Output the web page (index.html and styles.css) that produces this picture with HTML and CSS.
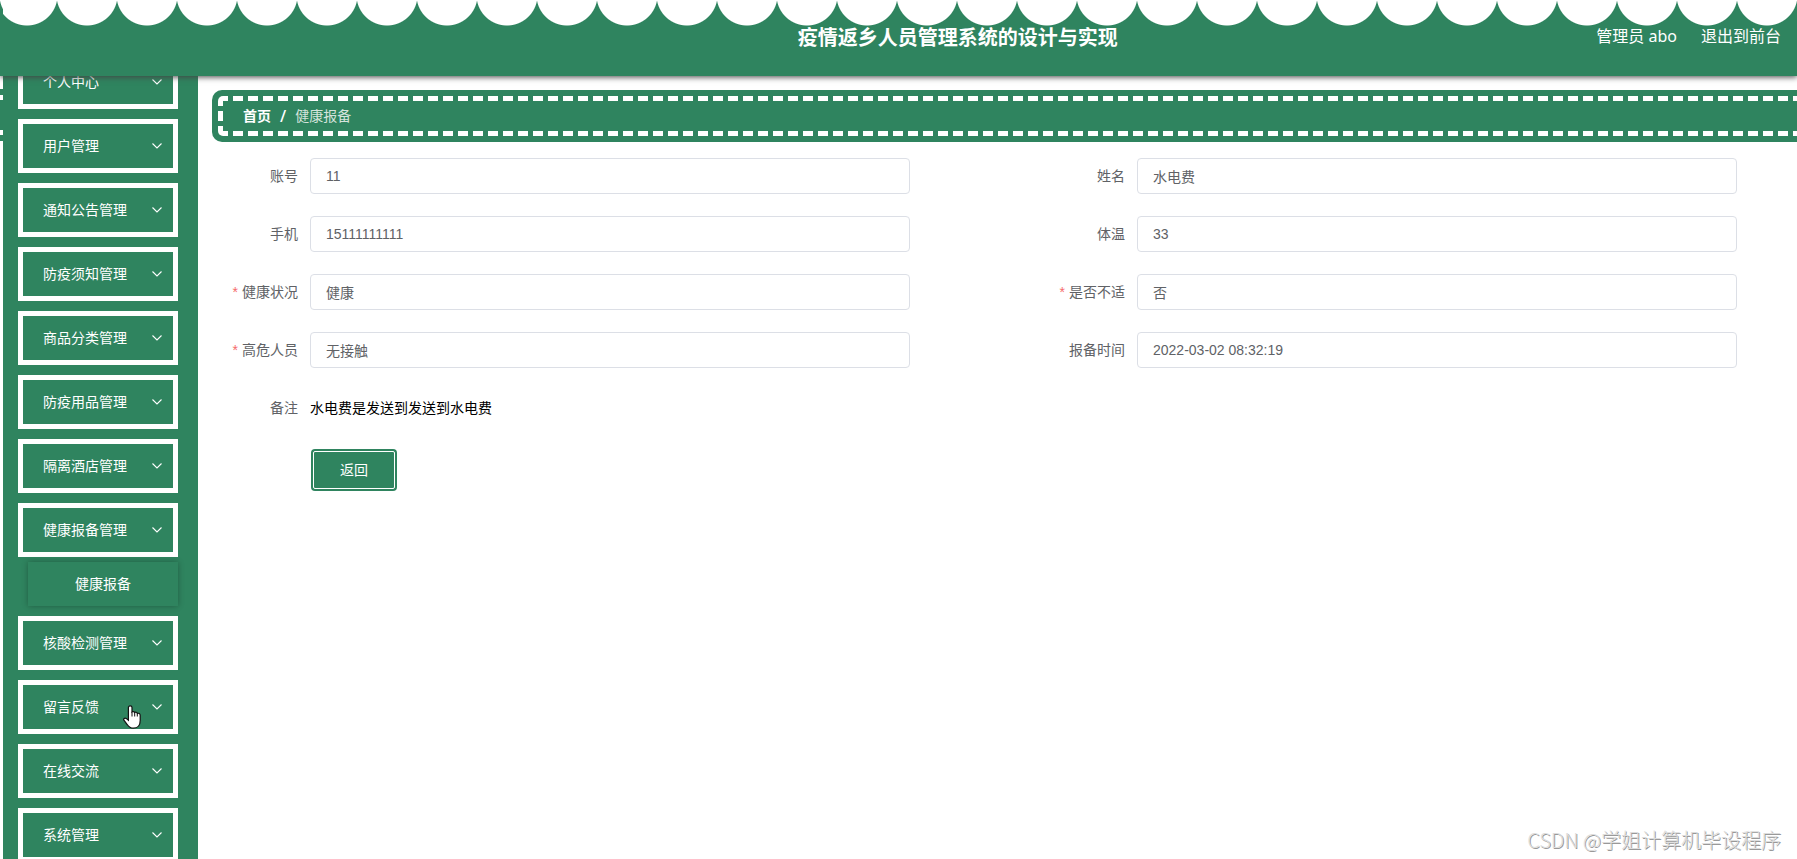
FILE: index.html
```
<!DOCTYPE html>
<html lang="zh-CN">
<head>
<meta charset="utf-8">
<title>疫情返乡人员管理系统的设计与实现</title>
<link rel="stylesheet" href="styles.css">
</head>
<body>
<svg class="defs" width="0" height="0" aria-hidden="true">
  <symbol id="chevron" viewBox="0 0 12 12"><path d="M1.5 3.5 6 8l4.5-4.5" fill="none" stroke="currentColor" stroke-width="1.1"/></symbol>
</svg>
<header class="topbar">
  <h1 class="topbar-title">疫情返乡人员管理系统的设计与实现</h1>
  <nav class="topbar-nav">
    <span>管理员 abo</span>
    <a href="#logout">退出到前台</a>
  </nav>
</header>
<div class="layout">
  <div class="edge"></div>
  <aside class="sidebar">
    <ul class="menu">
      <li><button class="menu-item" type="button">个人中心<svg class="chevron"><use href="#chevron"/></svg></button></li>
      <li><button class="menu-item" type="button">用户管理<svg class="chevron"><use href="#chevron"/></svg></button></li>
      <li><button class="menu-item" type="button">通知公告管理<svg class="chevron"><use href="#chevron"/></svg></button></li>
      <li><button class="menu-item" type="button">防疫须知管理<svg class="chevron"><use href="#chevron"/></svg></button></li>
      <li><button class="menu-item" type="button">商品分类管理<svg class="chevron"><use href="#chevron"/></svg></button></li>
      <li><button class="menu-item" type="button">防疫用品管理<svg class="chevron"><use href="#chevron"/></svg></button></li>
      <li><button class="menu-item" type="button">隔离酒店管理<svg class="chevron"><use href="#chevron"/></svg></button></li>
      <li>
        <button class="menu-item" type="button">健康报备管理<svg class="chevron"><use href="#chevron"/></svg></button>
        <a class="submenu-item" href="#report">健康报备</a>
      </li>
      <li><button class="menu-item" type="button">核酸检测管理<svg class="chevron"><use href="#chevron"/></svg></button></li>
      <li class="hovered">
        <button class="menu-item" type="button">留言反馈<svg class="chevron"><use href="#chevron"/></svg></button>
        <svg class="pointer" viewBox="0 0 18 24" aria-hidden="true"><path d="M7.2.8c1.1 0 1.8.8 1.8 1.8v4.2c.5-.5 2.3-.4 2.7.7.8-.6 2.3-.3 2.6.9 1.4-.5 2.9.2 2.9 1.8v5.3c0 4.300-2.200 7.700-6.700 7.700-3 0-4.800-1.200-6.100-3.400L.9 15.200c-.8-1.300.8-2.700 2.200-1.800l2.300 1.900V2.600c0-1 .7-1.800 1.800-1.800Z" fill="#fff" stroke="#111" stroke-width="1.200"/><path d="M9 6.800v4.700M11.700 7.500v4M14.300 8.400v3.100" fill="none" stroke="#111"/></svg>
      </li>
      <li><button class="menu-item" type="button">在线交流<svg class="chevron"><use href="#chevron"/></svg></button></li>
      <li><button class="menu-item" type="button">系统管理<svg class="chevron"><use href="#chevron"/></svg></button></li>
    </ul>
  </aside>
  <main class="main">
    <div class="page">
      <nav class="breadcrumb">
        <div class="breadcrumb-inner"><a href="#home">首页</a><b>/</b><span>健康报备</span></div>
      </nav>
      <form class="form">
        <div class="field"><label for="account">账号</label><input id="account" value="11" readonly></div>
        <div class="field"><label for="name">姓名</label><input id="name" value="水电费" readonly></div>
        <div class="field"><label for="phone">手机</label><input id="phone" value="15111111111" readonly></div>
        <div class="field"><label for="temp">体温</label><input id="temp" value="33" readonly></div>
        <div class="field required"><label for="health">健康状况</label><input id="health" value="健康" readonly></div>
        <div class="field required"><label for="unwell">是否不适</label><input id="unwell" value="否" readonly></div>
        <div class="field required"><label for="risk">高危人员</label><input id="risk" value="无接触" readonly></div>
        <div class="field"><label for="time">报备时间</label><input id="time" value="2022-03-02 08:32:19" readonly></div>
        <div class="field wide"><label for="remark">备注</label><output id="remark">水电费是发送到发送到水电费</output></div>
        <div class="actions wide"><button class="back" type="button">返回</button></div>
      </form>
    </div>
  </main>
</div>
<div class="watermark">CSDN @学姐计算机毕设程序</div>
</body>
</html>
```
FILE: styles.css
```
:root {
  --green: #2f845f;
}

* {
  box-sizing: border-box;
}

body {
  margin: 0;
  height: 100vh;
  display: flex;
  flex-direction: column;
  overflow: hidden;
  background: #fff;
  color: #000;
  font: 14px/20px "Liberation Sans", "Noto Sans CJK SC", sans-serif;
}

a {
  color: inherit;
  text-decoration: none;
}

.defs {
  position: absolute;
}

.topbar {
  position: relative;
  z-index: 2;
  flex: none;
  height: 76px;
  display: flex;
  align-items: flex-start;
  padding: 22px 16px 0 0;
  color: #fff;
  background:
    radial-gradient(circle at 30px -5px, #fff 30px, var(--green) 31px) 0 0 / 3px 76px no-repeat,
    radial-gradient(circle at 30px -5px, #fff 30px, var(--green) 31px) -3px 0 / 60px 76px repeat-x;
  box-shadow: 0 1px 6px #444;
}

.topbar::before {
  content: "";
  flex: 5;
}

.topbar-title {
  margin: 0;
  font: bold 20px/30px "Noto Sans CJK SC", sans-serif;
}

.topbar-nav {
  flex: 3 0 auto;
  display: flex;
  justify-content: flex-end;
  gap: 24px;
  font: 16px/28px "Noto Sans", "Noto Sans CJK SC", sans-serif;
}

.layout {
  flex: 1;
  min-height: 0;
  display: flex;
}

.edge {
  width: 3px;
  background: linear-gradient(#fff 13px, var(--green) 13px 19px, #fff 19px 24px, var(--green) 24px 54px, #fff 54px 59px, var(--green) 59px 65px, #fff 65px);
}

.sidebar {
  flex: none;
  width: 195px;
  display: flex;
  overflow: hidden;
  padding: 0 20px 0 15px;
  background: var(--green);
}

.menu {
  flex: 1;
  display: flex;
  flex-direction: column;
  gap: 10px;
  margin: -21px 0 0;
  padding: 0;
  list-style: none;
}

.menu-item {
  width: 100%;
  height: 54px;
  display: flex;
  align-items: center;
  justify-content: space-between;
  padding: 0 10px 0 20px;
  border: 5px solid #fff;
  background: var(--green);
  color: #fff;
  font: inherit;
}

.chevron {
  width: 12px;
  height: 12px;
}

.submenu-item {
  display: block;
  margin: 5px 0 0 10px;
  padding-left: 47px;
  line-height: 44px;
  color: #fff;
  box-shadow: 0 0 6px rgba(0, 0, 0, .3);
}

.hovered {
  position: relative;
}

.pointer {
  position: absolute;
  left: 105px;
  top: 25px;
  width: 18px;
  height: 24px;
}

.main {
  flex: 1;
  min-width: 0;
  overflow: hidden;
  padding: 14px 0 0 14px;
}

.page {
  margin-right: -87px;
}

.breadcrumb {
  padding: 6px;
  border-radius: 10px;
  background: var(--green);
}

.breadcrumb-inner {
  --dash: #fff 0 10px, transparent 10px 15px;
  height: 40px;
  display: flex;
  align-items: center;
  gap: 9px;
  padding-left: 25px;
  border-radius: 5px;
  background:
    repeating-linear-gradient(90deg, var(--dash)) top / 100% 5px no-repeat,
    repeating-linear-gradient(90deg, var(--dash)) bottom / 100% 5px no-repeat,
    repeating-linear-gradient(var(--dash)) left / 5px 100% no-repeat,
    repeating-linear-gradient(var(--dash)) right / 5px 100% no-repeat;
  color: #fff;
}

.breadcrumb-inner a {
  font-weight: bold;
}

.breadcrumb-inner b {
  font-family: "Noto Sans", sans-serif;
  font-size: 16px;
  font-weight: 500;
}

.breadcrumb-inner span {
  color: #d5e3dc;
}

.form {
  display: grid;
  grid-template-columns: 1fr 1fr;
  gap: 22px 0;
  padding: 16px 0 0 18px;
}

.field {
  height: 36px;
  display: flex;
  align-items: center;
}

.wide {
  grid-column: 1 / -1;
}

.field label {
  flex: none;
  width: 80px;
  padding-right: 12px;
  text-align: right;
  white-space: nowrap;
  color: #606266;
}

.required label::before {
  content: "*";
  margin-right: 4px;
  color: #f56c6c;
}

.field input {
  flex: 1;
  min-width: 0;
  max-width: 600px;
  height: 36px;
  padding: 0 15px;
  border: 1px solid #dcdfe6;
  border-radius: 4px;
  color: #606266;
  font: inherit;
}

.actions {
  padding: 3px 0 0 83px;
}

.back {
  width: 82px;
  height: 38px;
  border: 1px solid #fff;
  border-radius: 2px;
  background: var(--green);
  box-shadow: 0 0 0 2px var(--green);
  color: #fff;
  font: inherit;
}

.watermark {
  position: absolute;
  right: 16px;
  bottom: 4px;
  color: #ddd;
  font: 300 20px/30px "Noto Sans CJK SC", sans-serif;
  text-shadow: 1px 1px 0 #999;
}
```
